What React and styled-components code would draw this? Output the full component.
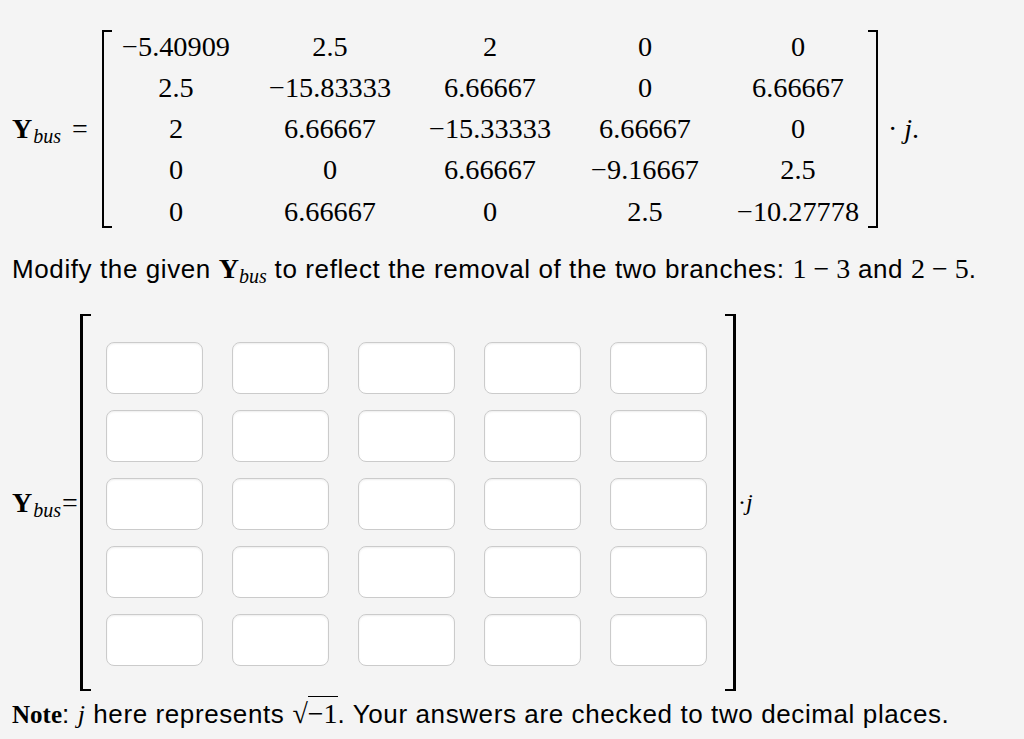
import React from "react";
import styled, { createGlobalStyle } from "styled-components";

const topRows = [
  ["−5.40909", "2.5", "2", "0", "0"],
  ["2.5", "−15.83333", "6.66667", "0", "6.66667"],
  ["2", "6.66667", "−15.33333", "6.66667", "0"],
  ["0", "0", "6.66667", "−9.16667", "2.5"],
  ["0", "6.66667", "0", "2.5", "−10.27778"],
];

const GlobalStyle = createGlobalStyle`
  body {
    margin: 0;
    background: #f4f4f4;
    color: #000;
  }
`;

const Page = styled.div`
  width: 1024px;
  height: 739px;
  padding-left: 12px;
  box-sizing: border-box;
  overflow: hidden;
  background: #f4f4f4;
`;

const GivenRow = styled.div`
  display: flex;
  align-items: center;
  padding-top: 26px;
`;

const Label = styled.div`
  width: ${(p) => p.$w}px;
  display: flex;
  align-items: baseline;
  font-family: "Liberation Serif", serif;
  font-size: 28px;
  line-height: 1;
`;

const BoldY = styled.span`
  font-family: "Liberation Serif", serif;
  font-weight: 700;
  font-size: 28px;
`;

const Sub = styled.span`
  font-family: "Liberation Serif", serif;
  font-style: italic;
  font-size: 20px;
  position: relative;
  top: 5px;
  margin-left: 1px;
`;

const Equals = styled.span`
  margin-left: ${(p) => p.$gap}px;
`;

const Matrix = styled.div`
  display: flex;
  align-items: stretch;
`;

const LeftBracket = styled.div`
  width: ${(p) => p.$w}px;
  margin: ${(p) => p.$m};
  border-left: ${(p) => p.$t}px solid #000;
  border-top: 2px solid #000;
  border-bottom: 2px solid #000;
`;

const RightBracket = styled.div`
  width: ${(p) => p.$w}px;
  margin: ${(p) => p.$m};
  border-right: ${(p) => p.$t}px solid #000;
  border-top: 2px solid #000;
  border-bottom: 2px solid #000;
`;

const NumGrid = styled.div`
  display: grid;
  grid-template-columns: 120px 130px 132px 120px 128px;
  grid-auto-rows: 41.25px;
  column-gap: 29px;
  margin: 0 6px 0 4px;
  font-family: "Liberation Serif", serif;
  font-size: 28.3px;
`;

const Cell = styled.div`
  display: flex;
  align-items: center;
  justify-content: center;
  white-space: nowrap;
`;

const Tail = styled.div`
  margin-left: ${(p) => p.$ml}px;
  font-family: "Liberation Serif", serif;
  font-size: ${(p) => p.$fs}px;
  white-space: nowrap;
`;

const Italic = styled.i`
  font-family: "Liberation Serif", serif;
`;

const Prompt = styled.p`
  margin: 22px 0 0;
  font-family: "Liberation Sans", Arial, sans-serif;
  font-size: 26px;
  letter-spacing: 0.6px;
  line-height: 30px;
  white-space: nowrap;
`;

const MathNum = styled.span`
  font-family: "Liberation Serif", serif;
  font-size: 28px;
  line-height: 1;
  letter-spacing: 0;
`;

const InlineSub = styled.span`
  font-family: "Liberation Serif", serif;
  font-style: italic;
  font-size: 20px;
  line-height: 1;
  letter-spacing: 0;
  position: relative;
  top: 5px;
`;

const AnswerRow = styled.div`
  display: flex;
  align-items: center;
  margin-top: 30px;
`;

const InputGrid = styled.div`
  display: grid;
  grid-template-columns: repeat(5, 97px);
  grid-auto-rows: 52px;
  column-gap: 29px;
  row-gap: 16px;
  padding: 28px 18px 25px 15px;
`;

const Box = styled.input`
  width: 97px;
  height: 52px;
  box-sizing: border-box;
  margin: 0;
  background: #fff;
  border: 1.5px solid #cbcbcb;
  border-radius: 8px;
  box-shadow: inset 0 1px 2px rgba(0, 0, 0, 0.07);
  outline: none;
`;

const Note = styled.p`
  margin: 8px 0 0;
  font-family: "Liberation Sans", Arial, sans-serif;
  font-size: 26px;
  letter-spacing: 0.6px;
  line-height: 30px;
  white-space: nowrap;
`;

const NoteBold = styled.b`
  font-family: "Liberation Serif", serif;
  font-size: 25px;
  letter-spacing: 0;
`;

const Radical = styled.span`
  font-family: "Liberation Serif", serif;
  font-size: 28px;
  letter-spacing: 0;
  margin-left: 8px;
`;

const Vinculum = styled.span`
  border-top: 1.5px solid #000;
  padding-top: 1px;
`;

const App = () => {
  return (
    <Page>
      <GlobalStyle />
      <GivenRow>
        <Label $w={90}>
          <BoldY>Y</BoldY>
          <Sub>bus</Sub>
          <Equals $gap={11}>=</Equals>
        </Label>
        <Matrix>
          <LeftBracket $w={8} $t={2} $m="4px 0" />
          <NumGrid>
            {topRows.flat().map((v, i) => (
              <Cell key={i}>{v}</Cell>
            ))}
          </NumGrid>
          <RightBracket $w={8} $t={2} $m="4px 0" />
        </Matrix>
        <Tail $ml={10} $fs={28}>
          · <Italic>j</Italic>.
        </Tail>
      </GivenRow>

      <Prompt>
        Modify the given <MathNum><BoldY>Y</BoldY></MathNum>
        <InlineSub>bus</InlineSub> to reflect the removal of the two branches:{" "}
        <MathNum>1 − 3</MathNum> and <MathNum>2 − 5</MathNum>.
      </Prompt>

      <AnswerRow>
        <Label $w={68}>
          <BoldY>Y</BoldY>
          <Sub>bus</Sub>
          <Equals $gap={1}>=</Equals>
        </Label>
        <Matrix>
          <LeftBracket $w={8} $t={3} $m="0" />
          <InputGrid>
            {Array.from({ length: 25 }).map((_, i) => (
              <Box key={i} type="text" aria-label={`entry ${i + 1}`} />
            ))}
          </InputGrid>
          <RightBracket $w={8} $t={3} $m="0" />
        </Matrix>
        <Tail $ml={2} $fs={24}>
          ·<Italic>j</Italic>
        </Tail>
      </AnswerRow>

      <Note>
        <NoteBold>Note</NoteBold>: <Italic>j</Italic> here represents
        <Radical>
          √<Vinculum>−1</Vinculum>
        </Radical>
        . Your answers are checked to two decimal places.
      </Note>
    </Page>
  );
};

export default App;
